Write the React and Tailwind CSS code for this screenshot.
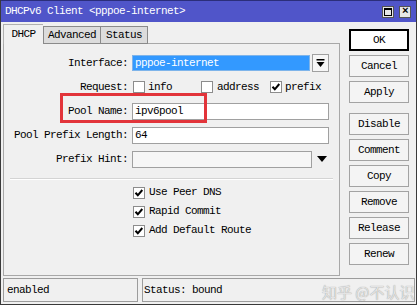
const mono = { fontFamily: '"Liberation Mono", "DejaVu Sans Mono", monospace' };

function Check({ checked }) {
  return (
    <svg width="12" height="12" viewBox="0 0 12 12" className="shrink-0">
      <rect x="0.5" y="0.5" width="11" height="11" fill="#fff" stroke="#8c8c8c" />
      {checked && <polyline points="2.5,5.8 4.8,8.3 9.3,3" fill="none" stroke="#000" strokeWidth="2" />}
    </svg>
  );
}

function Btn({ label, primary }) {
  return (
    <div
      className={`flex h-[22px] w-[60px] items-center justify-center ${
        primary ? 'border-2 border-black bg-white' : 'border border-[#a3a3a3] bg-[#f4f4f4]'
      }`}
    >
      {label}
    </div>
  );
}

function Row({ label, children }) {
  return (
    <div className="flex h-[24px] items-center">
      <div className="w-[124px] text-right">{label}</div>
      <div className="ml-[4px] flex items-center">{children}</div>
    </div>
  );
}

export default function App() {
  return (
    <div
      className="relative h-[305px] w-[419px] overflow-hidden bg-white text-[11px] tracking-[-0.6px] text-black"
      style={mono}
    >
      <div className="flex h-[305px] w-[417px] flex-col border-x border-b border-[#3a3a3a] bg-[#f0f0f0]">
        {/* title bar */}
        <div className="flex h-[22px] items-center justify-between border-t border-[#2b2e7a] bg-[#5055c9] pl-[4px] pr-[5px] text-white">
          <span>DHCPv6 Client &lt;pppoe-internet&gt;</span>
          <div className="flex gap-[5px]">
            <div className="flex h-[12px] w-[12px] items-center justify-center border border-[#555] bg-[#e6e6e6]">
              <div className="h-[8px] w-[8px] border border-black border-t-2" />
            </div>
            <div className="flex h-[12px] w-[12px] items-center justify-center border border-[#555] bg-[#e6e6e6] text-[11px] font-bold leading-none text-black">
              ×
            </div>
          </div>
        </div>

        {/* body */}
        <div className="flex h-[254px]">
          <div className="ml-[2px] flex w-[337px] flex-col">
            <div className="mt-[2px] flex h-[20px] items-end">
              <div className="flex h-[20px] w-[40px] items-center justify-center border-l border-t border-[#b0b0b0]">DHCP</div>
              <div className="flex h-[18px] w-[58px] items-center justify-center border-x border-t border-b border-[#8a8a8a] bg-[#dcdcdc]">Advanced</div>
              <div className="flex h-[18px] w-[47px] items-center justify-center border-r border-t border-b border-[#8a8a8a] bg-[#dcdcdc]">Status</div>
              <div className="flex-1 border-b border-[#a8a8a8]" />
            </div>
            <div className="h-[232px] border-x border-b border-[#a8a8a8] pt-[7px]">
              <Row label="Interface:">
                <div className="flex h-[16px] w-[178px] items-center border border-[#7eb4ea] bg-[#3399ff] pl-[2px] text-white">
                  pppoe-internet
                </div>
                <div className="ml-[2px] flex h-[18px] w-[17px] items-center justify-center border border-[#a0a0a0] bg-[#f6f6f6]">
                  <svg width="9" height="9" viewBox="0 0 9 9">
                    <rect x="0.5" y="0" width="8" height="1.5" fill="#000" />
                    <polygon points="0.5,3 8.5,3 4.5,8" fill="#000" />
                  </svg>
                </div>
              </Row>
              <Row label="Request:">
                <div className="ml-[1px] flex w-[68px] items-center gap-[3px]">
                  <Check />
                  <span>info</span>
                </div>
                <div className="flex w-[69px] items-center gap-[4px]">
                  <Check />
                  <span>address</span>
                </div>
                <div className="flex items-center gap-[3px]">
                  <Check checked />
                  <span>prefix</span>
                </div>
              </Row>
              <Row label="Pool Name:">
                <div className="flex h-[17px] w-[197px] items-center border border-[#a0a0a0] bg-white pl-[2px]">ipv6pool</div>
              </Row>
              <Row label="Pool Prefix Length:">
                <div className="flex h-[17px] w-[197px] items-center border border-[#a0a0a0] bg-white pl-[2px]">64</div>
              </Row>
              <Row label="Prefix Hint:">
                <div className="h-[17px] w-[180px] border border-[#a0a0a0] bg-[#f6f6f6]" />
                <svg width="10" height="6" viewBox="0 0 10 6" className="ml-[5px]">
                  <polygon points="0,0 10,0 5,6" fill="#000" />
                </svg>
              </Row>
              <div className="mx-[6px] mt-[7px] border-t border-b border-t-[#d4d4d4] border-b-white" />
              <div className="mt-[3px] pl-[129px]">
                {['Use Peer DNS', 'Rapid Commit', 'Add Default Route'].map((t) => (
                  <div key={t} className="flex h-[19px] items-center gap-[4px]">
                    <Check checked />
                    <span>{t}</span>
                  </div>
                ))}
              </div>
            </div>
          </div>

          <div className="ml-[9px] mt-[7px] flex flex-col gap-[4px]">
            <Btn label="OK" primary />
            <Btn label="Cancel" />
            <Btn label="Apply" />
            <div className="mt-[6px] flex flex-col gap-[4px]">
              <Btn label="Disable" />
              <Btn label="Comment" />
              <Btn label="Copy" />
              <Btn label="Remove" />
              <Btn label="Release" />
              <Btn label="Renew" />
            </div>
          </div>
        </div>

        {/* status bar */}
        <div className="ml-[2px] mt-[2px] flex h-[24px] gap-[4px]">
          <div className="flex w-[135px] items-center border border-[#9c9c9c] pl-[3px]">enabled</div>
          <div className="flex w-[273px] items-center border border-[#9c9c9c] pl-[1px]">Status: bound</div>
        </div>
      </div>

      {/* highlight box */}
      <div className="absolute left-[60px] top-[93px] h-[30px] w-[147px] border-[3px] border-[#e2343a]" />

      {/* watermark */}
      <div
        className="absolute left-[322px] top-[281px] text-[15px] tracking-normal text-[#e4e4e4] [text-shadow:0_0_1px_#8a8a8a]"
        style={{ fontFamily: '"Noto Sans CJK SC", sans-serif' }}
      >
        知乎 @不认识
      </div>
    </div>
  );
}
